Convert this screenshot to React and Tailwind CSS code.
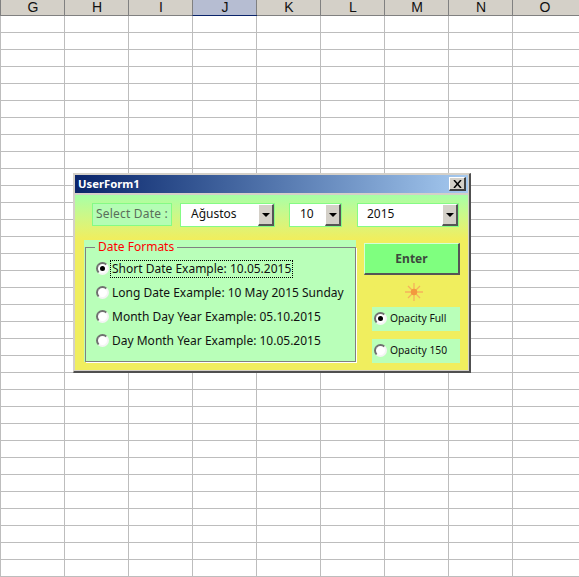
import React from "react";

const columns = ["G", "H", "I", "J", "K", "L", "M", "N", "O"];
const formats = [
  "Short Date Example: 10.05.2015",
  "Long Date Example: 10 May 2015 Sunday",
  "Month Day Year Example: 05.10.2015",
  "Day Month Year Example: 10.05.2015",
];

function Radio({ checked }) {
  return (
    <span className="relative block w-[13px] h-[13px] mb-[2px] rounded-full bg-white border-2 border-t-[#707070] border-l-[#707070] border-r-[#f4f4f4] border-b-[#f4f4f4] shrink-0">
      {checked && <span className="absolute left-[2px] top-[2px] w-[5px] h-[5px] rounded-full bg-black" />}
    </span>
  );
}

function Combo({ value, width, pad }) {
  return (
    <div className={`flex h-[24px] bg-white border border-[#85fb85] ${width}`}>
      <span className={`flex-1 text-[12px] leading-[20px] text-[#111] ${pad}`}>{value}</span>
      <span className="flex items-center justify-center w-[16px] h-[22px] bg-[#d4d0c8] border-t border-l border-t-white border-l-white border-r-2 border-b-2 border-r-[#555] border-b-[#555]">
        <svg width="8" height="4" viewBox="0 0 8 4"><path d="M0 0h8L4 4z" fill="#000" /></svg>
      </span>
    </div>
  );
}

function Sun() {
  return (
    <svg width="18" height="18" viewBox="0 0 18 18" className="block">
      <path d="M9 0v18M0 9h18M3 3l12 12M15 3L3 15" stroke="#f5b25c" strokeWidth="1.3" />
      <circle cx="9" cy="9" r="3.2" fill="#f39a3e" />
    </svg>
  );
}

export default function App() {
  return (
    <div className="relative w-[579px] h-[577px] overflow-hidden bg-white font-['Liberation_Sans',sans-serif]">
      {/* column headers */}
      <div className="flex h-[16px] bg-[#d4d0c8] border-b border-[#808080]">
        {columns.map((c) => (
          <div
            key={c}
            className={`w-[64px] shrink-0 pl-[1px] text-center text-[14px] leading-[15px] text-[#111] border-l ${c === "J" ? "bg-[#b6bdd2] border-[#808080] border-r border-r-[#0a246a] -mb-[1px] border-b border-b-[#0a246a] w-[65px] -mr-[1px]" : "border-[#808080]"}`}
          >
            {c}
          </div>
        ))}
      </div>

      {/* sheet grid */}
      <div className="flex flex-col">
        {Array.from({ length: 33 }).map((_, r) => (
          <div key={r} className="flex h-[17px] border-b border-[#bdbdbd]">
            {columns.map((c) => (
              <div key={c} className="w-[64px] shrink-0 border-l border-[#bdbdbd]" />
            ))}
          </div>
        ))}
      </div>

      {/* userform window */}
      <div className="absolute left-[73px] top-[173px] w-[398px] h-[200px] flex flex-col bg-[#d4d0c8] border-t border-l border-t-[#d4d0c8] border-l-[#d4d0c8] border-r-2 border-b-2 border-r-[#505050] border-b-[#505050] p-[1px] font-['Noto_Sans',sans-serif]">
        <div className="flex items-center justify-between h-[18px] pl-[3px] pr-[2px] bg-gradient-to-r from-[#0a246a] to-[#a6caf0] shrink-0">
          <span className="text-[11.3px] font-bold text-white">UserForm1</span>
          <span className="flex items-center justify-center w-[17px] h-[14px] bg-[#d4d0c8] border-t border-l border-t-white border-l-white border-r-2 border-b-2 border-r-[#404040] border-b-[#404040]">
            <svg width="9" height="8" viewBox="0 0 9 8"><path d="M1 0l7 8M8 0L1 8" stroke="#000" strokeWidth="1.5" /></svg>
          </span>
        </div>

        <div className="flex-1 flex flex-col mt-[2px] bg-gradient-to-b from-[#a6ffa6] to-[#f0ee5e] to-[25%] pl-[9px] pt-[8px]">
          <div className="flex h-[24px]">
            <span className="w-[80px] h-[23px] ml-[8px] bg-[#b4fdb4] border border-[#85fb85] text-center text-[12px] tracking-[0.2px] leading-[19px] text-[#5a6e5a]">
              Select Date :
            </span>
            <div className="ml-[8px]"><Combo value="Ağustos" width="w-[95px]" pad="pl-[10px]" /></div>
            <div className="ml-[14px]"><Combo value="10" width="w-[53px]" pad="pl-[10px]" /></div>
            <div className="ml-[15px]"><Combo value="2015" width="w-[102px]" pad="pl-[9px]" /></div>
          </div>

          <div className="flex mt-[13px]">
            <div className="w-[272px] h-[122px] bg-[#b9ffb9] pl-[1px]">
              <fieldset className="h-full border border-[#808080] shadow-[1px_1px_0_#fff] pl-[10px]">
                <legend className="-ml-[1px] px-[3px] text-[12px] leading-[14px] text-[#ff0000]">Date Formats</legend>
                <div className="flex flex-col gap-[6px] mt-[6px]">
                  {formats.map((f, i) => (
                    <div key={f} className="flex items-center gap-[1px] h-[18px]">
                      <Radio checked={i === 0} />
                      <span className={`h-[18px] px-[1px] border text-[12px] leading-[16px] text-[#111] whitespace-nowrap ${i === 0 ? "border-dotted border-black" : "border-transparent"}`}>{f}</span>
                    </div>
                  ))}
                </div>
              </fieldset>
            </div>

            <div className="flex flex-col ml-[8px] mt-[3px]">
              <button className="w-[96px] h-[32px] pt-[1px] bg-[#7fff7f] border-t border-l border-t-[#d4ffd4] border-l-[#d4ffd4] border-r-2 border-b-2 border-r-[#555] border-b-[#555] text-[12px] font-bold text-[#3d4a3d]">
                Enter
              </button>
              <div className="flex justify-center mt-[8px] pl-[4px]"><Sun /></div>
              <div className="flex items-center gap-[3px] w-[88px] h-[24px] mt-[6px] ml-[8px] pl-[2px] bg-[#b9ffb9] text-[10.3px] text-[#111]">
                <Radio checked /><span>Opacity Full</span>
              </div>
              <div className="flex items-center gap-[3px] w-[88px] h-[24px] mt-[8px] ml-[8px] pl-[2px] bg-[#b9ffb9] text-[10.3px] text-[#111]">
                <Radio /><span>Opacity 150</span>
              </div>
            </div>
          </div>
        </div>
      </div>
    </div>
  );
}
